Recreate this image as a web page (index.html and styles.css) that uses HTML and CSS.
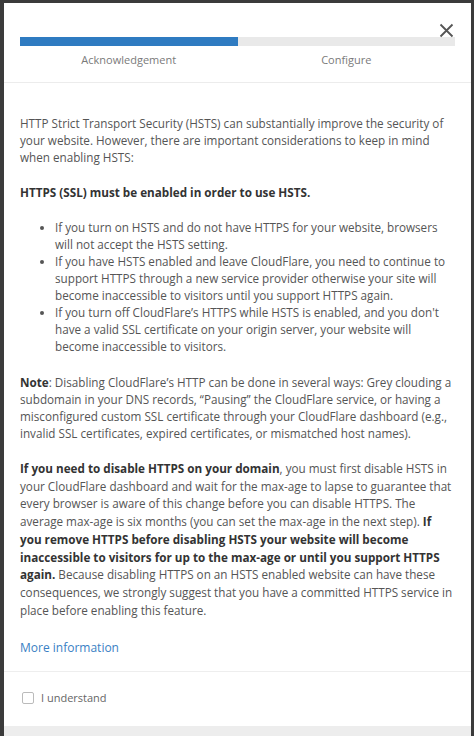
FILE: index.html
```html
<!DOCTYPE html>
<html>
<head>
<meta charset="utf-8">
<link rel="stylesheet" href="styles.css">
</head>
<body>
<div class="modal">
  <button class="close" aria-label="Close">
    <svg width="15" height="15" viewBox="0 0 15 15"><path d="M1.5 1.5 L13.5 13.5 M13.5 1.5 L1.5 13.5" stroke="#555" stroke-width="1.8" fill="none"/></svg>
  </button>
  <div class="steps">
    <div class="progress"><div class="fill" style="width:50%"></div></div>
    <div class="labels">
      <span>Acknowledgement</span>
      <span>Configure</span>
    </div>
  </div>
  <div class="body">
    <p>HTTP Strict Transport Security (HSTS) can substantially improve the security of<br>your website. However, there are important considerations to keep in mind<br>when enabling HSTS:</p>
    <p><strong>HTTPS (SSL) must be enabled in order to use HSTS.</strong></p>
    <ul>
      <li>If you turn on HSTS and do not have HTTPS for your website, browsers<br>will not accept the HSTS setting.</li>
      <li>If you have HSTS enabled and leave CloudFlare, you need to continue to<br>support HTTPS through a new service provider otherwise your site will<br>become inaccessible to visitors until you support HTTPS again.</li>
      <li>If you turn off CloudFlare’s HTTPS while HSTS is enabled, and you don't<br>have a valid SSL certificate on your origin server, your website will<br>become inaccessible to visitors.</li>
    </ul>
    <p><strong>Note</strong>: Disabling CloudFlare’s HTTP can be done in several ways: Grey clouding a<br>subdomain in your DNS records, “Pausing” the CloudFlare service, or having a<br>misconfigured custom SSL certificate through your CloudFlare dashboard (e.g.,<br>invalid SSL certificates, expired certificates, or mismatched host names).</p>
    <p class="long"><strong>If you need to disable HTTPS on your domain</strong>, you must first disable HSTS in<br>your CloudFlare dashboard and wait for the max-age to lapse to guarantee that<br>every browser is aware of this change before you can disable HTTPS. The<br>average max-age is six months (you can set the max-age in the next step). <strong>If<br>you remove HTTPS before disabling HSTS your website will become<br>inaccessible to visitors for up to the max-age or until you support HTTPS<br>again.</strong> Because disabling HTTPS on an HSTS enabled website can have these<br>consequences, we strongly suggest that you have a committed HTTPS service in<br>place before enabling this feature.</p>
    <a class="more" href="#">More information</a>
  </div>
  <div class="confirm">
    <label class="check"><span class="box"></span>I understand</label>
  </div>
  <div class="footer"></div>
</div>
</body>
</html>
```
FILE: styles.css
```css
html, body {
  margin: 0;
  padding: 0;
  height: 100%;
}
body {
  background: #3b3b3b;
  font-family: "Open Sans", "Liberation Sans", sans-serif;
  overflow: hidden;
}
.modal {
  position: relative;
  margin: 3px 3px 0 4px;
  background: #fff;
  height: calc(100% - 3px);
  box-sizing: border-box;
}
.close {
  position: absolute;
  top: 20px;
  right: 17px;
  background: none;
  border: 0;
  padding: 0;
  width: 15px;
  height: 15px;
  cursor: pointer;
}
.close svg { display: block; }
.steps {
  padding: 34px 16px 0 16px;
  height: 45px;
  border-bottom: 1px solid #ececec;
}
.progress {
  height: 9px;
  background: #e9e9e9;
}
.fill {
  height: 100%;
  background: #2f7bc1;
}
.labels {
  display: grid;
  grid-template-columns: 1fr 1fr;
  text-align: center;
  font-size: 11px;
  color: #7a7a7a;
  margin-top: 6px;
  line-height: 15px;
}
.body {
  padding: 32px 2px 0 16px;
  font-size: 11.7px;
  line-height: 17px;
  color: #555;
  height: 589px;
  box-sizing: border-box;
  border-bottom: 1px solid #eee;
  white-space: nowrap;
}
.body p {
  margin: 0 0 18px 0;
}
.body p.long {
  line-height: 17.7px;
}
.body strong {
  color: #333;
  font-weight: 700;
}
.body ul {
  margin: 0 0 19px 0;
  padding-left: 35px;
}
.more {
  display: inline-block;
  margin-top: 2px;
  color: #3a7fc4;
  text-decoration: none;
  font-size: 12px;
}
.confirm {
  height: 54px;
  display: flex;
  align-items: center;
  padding-left: 18px;
  padding-bottom: 3px;
  box-sizing: border-box;
}
.check {
  display: flex;
  align-items: center;
  font-size: 11px;
  color: #666;
}
.box {
  width: 10px;
  height: 10px;
  border: 1px solid #bbb;
  border-radius: 2px;
  margin-right: 7px;
}
.footer {
  background: #ededed;
  height: 20px;
}
```
